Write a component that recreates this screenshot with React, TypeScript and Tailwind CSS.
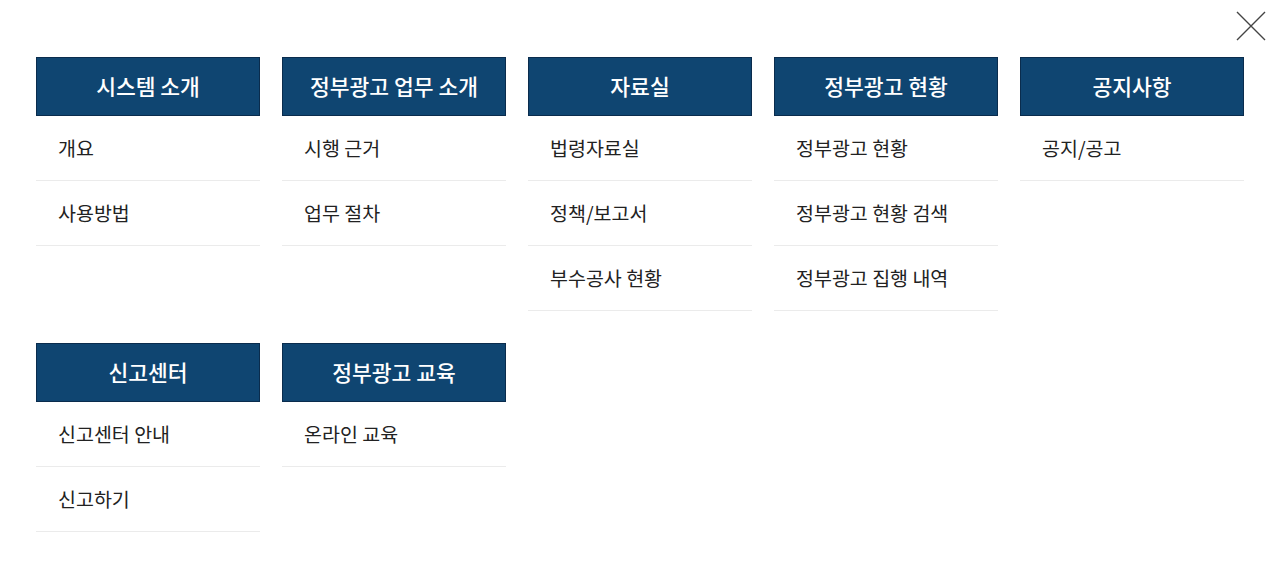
const menus: { title: string; items: string[] }[] = [
  { title: '시스템 소개', items: ['개요', '사용방법'] },
  { title: '정부광고 업무 소개', items: ['시행 근거', '업무 절차'] },
  { title: '자료실', items: ['법령자료실', '정책/보고서', '부수공사 현황'] },
  { title: '정부광고 현황', items: ['정부광고 현황', '정부광고 현황 검색', '정부광고 집행 내역'] },
  { title: '공지사항', items: ['공지/공고'] },
  { title: '신고센터', items: ['신고센터 안내', '신고하기'] },
  { title: '정부광고 교육', items: ['온라인 교육'] },
]

export default function App() {
  return (
    <div
      className="relative w-[1280px] h-[588px] bg-white overflow-hidden"
      style={{ fontFamily: '"Noto Sans CJK KR", "Noto Sans", sans-serif' }}
    >
      <button className="absolute right-[14px] top-[11px] w-[30px] h-[30px]" aria-label="닫기">
        <svg viewBox="0 0 30 30" className="w-[30px] h-[30px]">
          <path d="M1 1 L29 29 M29 1 L1 29" stroke="#444" strokeWidth="1.4" fill="none" />
        </svg>
      </button>

      <div className="grid grid-cols-[repeat(5,224px)] gap-x-[22px] gap-y-[32px] pl-[36px] pt-[57px]">
        {menus.map(m => (
          <div key={m.title}>
            <div className="h-[59px] flex items-center justify-center bg-[#0f4571] border border-[#0a2c4d] text-white text-[21.5px] font-medium">
              {m.title}
            </div>
            <ul>
              {m.items.map(it => (
                <li
                  key={it}
                  className="h-[65px] flex items-center pl-[22px] border-b border-[#ebebeb] text-[19.5px] text-[#222]"
                >
                  {it}
                </li>
              ))}
            </ul>
          </div>
        ))}
      </div>
    </div>
  )
}
